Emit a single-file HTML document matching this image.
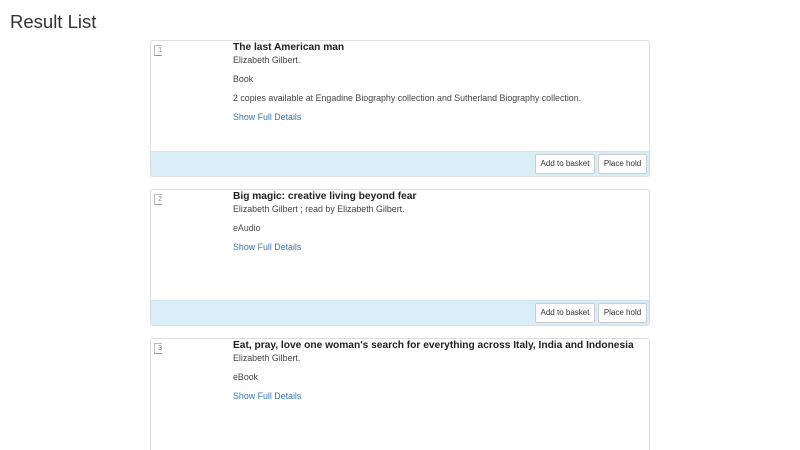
<!DOCTYPE html>
<html><head><style>
html,body{margin:0;background:#fff;font-family:"Liberation Sans",sans-serif;color:#333;width:800px;height:450px;overflow:hidden;position:relative}
h1{position:absolute;left:10px;top:11px;margin:0;font-size:18.5px;font-weight:normal;line-height:22px;color:#333}
.card{position:absolute;left:150px;width:498px;border:1px solid #ddd;border-radius:3px;background:#fff;overflow:hidden}
.img{position:absolute;left:3px;top:4px;width:7px;height:9px;border:1px solid #bbb;border-right:none;border-bottom-color:#999;font-size:7px;color:#888;line-height:9px;text-align:right}
.t{position:absolute;left:82px;font-size:8.85px;white-space:nowrap;color:#444}
.ti{font-weight:bold;font-size:10.2px;color:#222}
.a{color:#3a76b0}
.foot{position:absolute;left:0;right:0;bottom:0;height:24px;background:#d9edf7;border-top:1px solid #cfe3ee}
.btn{position:absolute;top:2px;height:18px;background:#fff;border:1px solid #ccc;border-radius:2px;font-size:8px;line-height:18px;text-align:center;color:#333}
</style></head><body>
<h1>Result List</h1>

<div class="card" style="top:40px;height:135px">
<div class="img">1</div>
<div class="t ti" style="top:1px">The last American man</div>
<div class="t" style="top:14px">Elizabeth Gilbert.</div>
<div class="t" style="top:33px">Book</div>
<div class="t" style="top:52px">2 copies available at Engadine Biography collection and Sutherland Biography collection.</div>
<div class="t a" style="top:71px">Show Full Details</div>
<div class="foot"><div class="btn" style="left:384px;width:58px">Add to basket</div><div class="btn" style="left:447px;width:47px">Place hold</div></div>
</div>

<div class="card" style="top:189px;height:135px">
<div class="img">2</div>
<div class="t ti" style="top:1px">Big magic: creative living beyond fear</div>
<div class="t" style="top:14px">Elizabeth Gilbert ; read by Elizabeth Gilbert.</div>
<div class="t" style="top:33px">eAudio</div>
<div class="t a" style="top:52px">Show Full Details</div>
<div class="foot"><div class="btn" style="left:384px;width:58px">Add to basket</div><div class="btn" style="left:447px;width:47px">Place hold</div></div>
</div>

<div class="card" style="top:338px;height:120px">
<div class="img">3</div>
<div class="t ti" style="top:1px">Eat, pray, love one woman's search for everything across Italy, India and Indonesia</div>
<div class="t" style="top:14px">Elizabeth Gilbert.</div>
<div class="t" style="top:33px">eBook</div>
<div class="t a" style="top:52px">Show Full Details</div>
</div>
</body></html>
